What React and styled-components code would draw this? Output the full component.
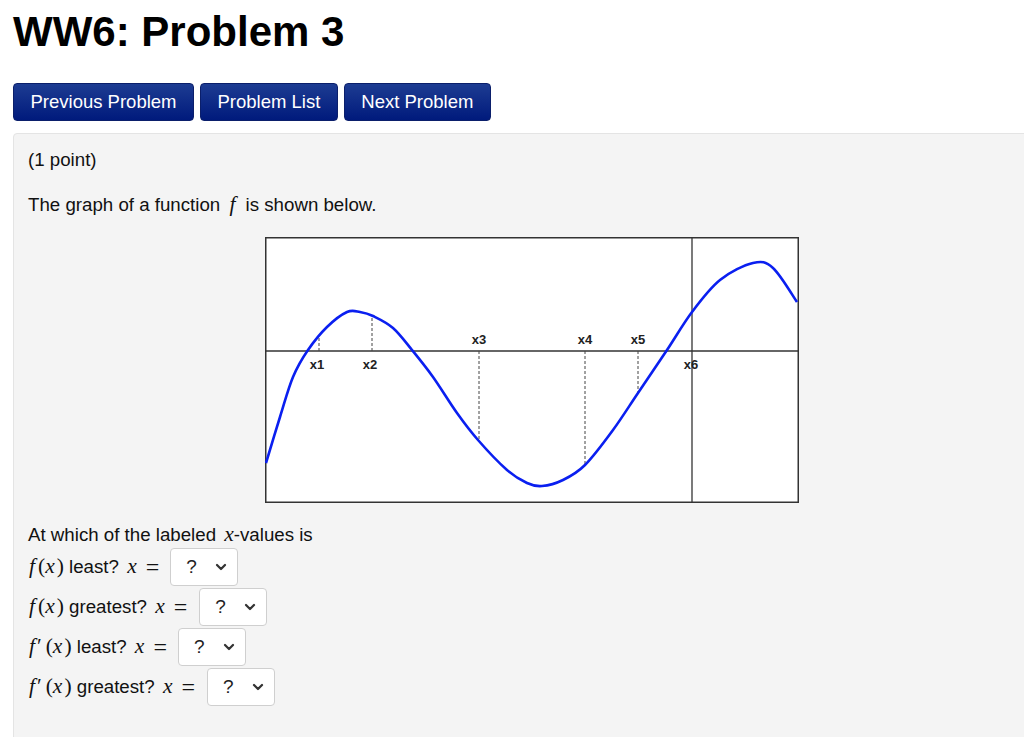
import styled, { createGlobalStyle } from 'styled-components'
import { ChevronDown } from 'lucide-react'

const GlobalStyle = createGlobalStyle`
  html, body {
    margin: 0;
    padding: 0;
    background: #fff;
    font-family: "Liberation Sans", Arial, Helvetica, sans-serif;
    color: #111;
    overflow: hidden;
  }
`

const Page = styled.div`
  padding: 7px 0 0 13px;
`

const Title = styled.h1`
  margin: 0;
  font-size: 42px;
  line-height: 50px;
  font-weight: 700;
  color: #000;
`

const NavBar = styled.div`
  display: flex;
  gap: 6px;
  margin-top: 26px;
`

const NavButton = styled.button`
  height: 38px;
  padding: 0 16.5px;
  border: 1px solid #0b1f6b;
  border-radius: 4px;
  background: linear-gradient(#1d3c92, #001a7c);
  color: #fff;
  font-family: inherit;
  font-size: 18.5px;
  cursor: pointer;
`

const Panel = styled.div`
  margin-top: 12px;
  margin-right: -40px;
  min-height: 700px;
  padding: 14px 14px 0 14px;
  background: #f4f4f4;
  border: 1px solid #e4e4e4;
  border-radius: 4px 0 0 0;
`

const Line = styled.div`
  font-size: 18.7px;
  line-height: 24px;
  margin-top: ${p => p.gap || 0}px;
`

const M = styled.span`
  font-family: "Liberation Serif", "Times New Roman", serif;
  font-style: ${p => (p.upright ? 'normal' : 'italic')};
  font-size: 21.5px;
  line-height: 1;
  padding: 0 ${p => p.pr || 0}px 0 ${p => p.pl || 0}px;
`

const Eq = styled.span`
  font-family: "Liberation Serif", "Times New Roman", serif;
  font-size: 24px;
  line-height: 1;
  margin: 0 11px 0 9px;
`

const GraphWrap = styled.div`
  margin: 20px 0 0 237px;
  width: 534px;
  height: 266px;
`

const Row = styled.div`
  display: flex;
  align-items: center;
  height: 40px;
  font-size: 18.7px;
  white-space: pre;
`

const Select = styled.div`
  box-sizing: border-box;
  display: flex;
  align-items: center;
  justify-content: space-between;
  width: 68px;
  height: 38px;
  padding: 0 8px 0 15px;
  margin-left: ${p => p.shift || 0}px;
  background: #fff;
  border: 1px solid #cfcfcf;
  border-radius: 4px;
  font-size: 19px;
  color: #222;
`

const pts = [
  [1, 226], [15, 180], [28, 140], [43, 113], [62, 90], [82, 75], [95, 75], [108, 79],
  [128, 91], [147, 113], [168, 140], [192, 176], [213, 203], [242, 233], [262, 246],
  [277, 249], [298, 243], [320, 228], [348, 193], [373, 156], [402, 113], [427, 75],
  [455, 43], [488, 26], [508, 31], [532, 65],
]

function splinePath(p) {
  let d = `M${p[0][0]},${p[0][1]}`
  for (let i = 0; i < p.length - 1; i++) {
    const p0 = p[i - 1] || p[i]
    const p1 = p[i]
    const p2 = p[i + 1]
    const p3 = p[i + 2] || p2
    const c1 = [p1[0] + (p2[0] - p0[0]) / 6, p1[1] + (p2[1] - p0[1]) / 6]
    const c2 = [p2[0] - (p3[0] - p1[0]) / 6, p2[1] - (p3[1] - p1[1]) / 6]
    d += ` C${c1[0].toFixed(1)},${c1[1].toFixed(1)} ${c2[0].toFixed(1)},${c2[1].toFixed(1)} ${p2[0]},${p2[1]}`
  }
  return d
}

const marks = [
  { x: 54, y: 101, label: 'x1', below: true },
  { x: 107, y: 78, label: 'x2', below: true },
  { x: 214, y: 203, label: 'x3' },
  { x: 320, y: 228, label: 'x4' },
  { x: 373, y: 156, label: 'x5' },
]

const Graph = () => (
  <svg width="534" height="266" viewBox="0 0 534 266">
    <rect x="0.75" y="0.75" width="532.5" height="264.5" fill="#fff" stroke="#333" strokeWidth="1.5" />
    <line x1="0" y1="114" x2="534" y2="114" stroke="#333" strokeWidth="1.3" />
    <line x1="427" y1="0" x2="427" y2="266" stroke="#333" strokeWidth="1.3" />
    {marks.map(m => (
      <line key={m.label} x1={m.x} y1="114" x2={m.x} y2={m.y} stroke="#444" strokeWidth="1" strokeDasharray="3,2" />
    ))}
    <path d={splinePath(pts)} fill="none" stroke="#0a1ff0" strokeWidth="2.6" strokeLinejoin="round" />
    <g fontFamily="Liberation Sans, Arial, sans-serif" fontWeight="700" fontSize="13" fill="#222" textAnchor="middle">
      {marks.map(m => (
        <text key={m.label} x={m.x + (m.below ? -2 : 0)} y={m.below ? 132 : 107}>{m.label}</text>
      ))}
      <text x="426" y="132">x6</text>
    </g>
  </svg>
)

const Choice = ({ shift }) => (
  <Select shift={shift}>
    <span>?</span>
    <ChevronDown size={16} strokeWidth={3.4} color="#333" />
  </Select>
)

const questions = [
  { prime: false, word: 'least', shift: 0 },
  { prime: false, word: 'greatest', shift: 1 },
  { prime: true, word: 'least', shift: 0 },
  { prime: true, word: 'greatest', shift: 1 },
]

export default function App() {
  return (
    <Page>
      <GlobalStyle />
      <Title>WW6: Problem 3</Title>
      <NavBar>
        <NavButton>Previous Problem</NavButton>
        <NavButton>Problem List</NavButton>
        <NavButton>Next Problem</NavButton>
      </NavBar>
      <Panel>
        <Line>(1 point)</Line>
        <Line gap={21}>
          The graph of a function <M pl={4} pr={5}>f</M> is shown below.
        </Line>
        <GraphWrap>
          <Graph />
        </GraphWrap>
        <Line gap={20}>
          At which of the labeled <M pl={3}>x</M>-values is
        </Line>
        {questions.map((q, i) => (
          <Row key={i}>
            <M pl={1} pr={q.prime ? 2 : 3}>f</M>
            {q.prime && <M upright pr={4}>′</M>}
            <M upright>(</M>
            <M pr={2}>x</M>
            <M upright>)</M>
            {` ${q.word}? `}
            <M pl={3}>x</M>
            <Eq>=</Eq>
            <Choice shift={q.shift} />
          </Row>
        ))}
      </Panel>
    </Page>
  )
}
